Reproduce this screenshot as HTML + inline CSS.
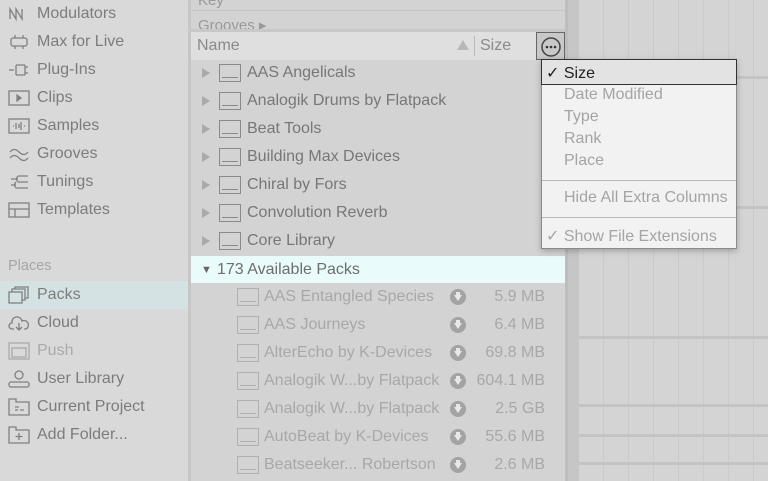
<!DOCTYPE html>
<html><head><style>
*{margin:0;padding:0;box-sizing:border-box}
body{width:768px;height:481px;overflow:hidden;background:#d6d6d6;font-family:"Liberation Sans",sans-serif;position:relative;color:#7a7a7a}
.abs{position:absolute}
.side{left:0;top:0;width:188px;height:481px;background:#d9d9d9}
.sb{left:188px;top:0;width:3px;height:481px;background:#c6c6c6}
.si{position:absolute;left:8px;height:28px;font-size:16px;line-height:28px;display:flex;align-items:center;color:#7c7c7c}
.si svg{width:22px;height:18px;margin-right:7px;stroke:#808080;fill:none;stroke-width:1.3}
.br{left:191px;top:0;width:374px;height:481px;background:#d3d3d3}
.row{position:absolute;left:191px;width:374px;height:28px;font-size:16px;line-height:28px;color:#777}
.tri{position:absolute;left:11px;top:9px;width:0;height:0;border-left:8px solid #aaa;border-top:5px solid transparent;border-bottom:5px solid transparent}
.pk{position:absolute;width:22px;height:18px;border:1.5px solid #8a8a8a;top:5px}
.pk:after{content:"";position:absolute;left:2px;right:2px;bottom:3px;height:1px;background:#8a8a8a}
.lt .pk{border-color:#b0b0b0}.lt .pk:after{background:#b0b0b0}
.lt{color:#a8a8a8}
.dl{position:absolute;left:259px;top:6px;width:16px;height:16px;border-radius:50%;background:#a3a3a3}
.dl:after{content:"";position:absolute;left:4px;top:6px;border-top:6px solid #e8e8e8;border-left:4px solid transparent;border-right:4px solid transparent}
.dl:before{content:"";position:absolute;left:6px;top:3px;width:4px;height:4px;background:#e8e8e8}
.sz{position:absolute;right:20px;top:0}
.grid{left:579px;top:0;width:189px;height:481px;background:#d4d4d4;background-image:repeating-linear-gradient(90deg,transparent 0 24px,#cacaca 24px 25px)}
.hl{position:absolute;left:579px;width:189px;height:3px;background:#c4c4c4}
.mi{position:absolute;left:564px;font-size:16px;color:#a4a4a4}
</style></head><body>
<div class="abs side"></div><div class="abs sb"></div>
<div class="si" style="top:0"><svg viewBox="0 0 22 18"><path d="M2 14V4l6 10V4l6 10V4"/></svg>Modulators</div>
<div class="si" style="top:28px"><svg viewBox="0 0 22 18"><rect x="3" y="5" width="16" height="8" rx="2"/><path d="M7 2v3M15 2v3M7 13v3M15 13v3"/></svg>Max for Live</div>
<div class="si" style="top:56px"><svg viewBox="0 0 22 18"><path d="M1 9h5M8 4h9M8 14h9M8 4v10M17 4v10M17 6h3M17 12h3"/></svg>Plug-Ins</div>
<div class="si" style="top:84px"><svg viewBox="0 0 22 18"><rect x="1" y="2" width="20" height="14"/><path d="M9 6l4 3-4 3z" fill="#808080"/></svg>Clips</div>
<div class="si" style="top:112px"><svg viewBox="0 0 22 18"><rect x="1" y="2" width="20" height="14"/><path d="M5 9h1M8 6v6M11 7v4M13 5v8M16 9h1"/></svg>Samples</div>
<div class="si" style="top:140px"><svg viewBox="0 0 22 18"><path d="M2 7q4-5 9 0t9 0M2 13q4-5 9 0t9 0"/></svg>Grooves</div>
<div class="si" style="top:168px"><svg viewBox="0 0 22 18"><path d="M3 6h7M3 12h5M10 3h10M10 9h10M8 15h12M10 3q-3 3 0 6M8 9q-3 3 0 6"/></svg>Tunings</div>
<div class="si" style="top:196px"><svg viewBox="0 0 22 18"><rect x="1" y="2" width="20" height="14"/><path d="M1 8h20M7 8v8"/></svg>Templates</div>
<div class="abs" style="left:8px;top:258px;font-size:14.5px;color:#a6a6a6">Places</div>
<div class="abs" style="left:0;top:281px;width:188px;height:28px;background:#d5e2e3"></div>
<div class="si" style="top:281px"><svg viewBox="0 0 22 18"><rect x="1" y="6" width="13" height="11"/><path d="M4 6V3h13v11h-3M7 3V1h13v11h-3"/></svg>Packs</div>
<div class="si" style="top:309px"><svg viewBox="0 0 22 18"><path d="M6 15H4a3 3 0 0 1 0-6 5 5 0 0 1 10-2 4 4 0 0 1 4 8h-2M11 9v7M8 13l3 3 3-3"/></svg>Cloud</div>
<div class="si" style="top:337px;color:#aaa"><svg viewBox="0 0 22 18" style="stroke:#aaa"><rect x="1" y="1" width="20" height="16"/><rect x="4" y="6" width="14" height="9"/></svg>Push</div>
<div class="si" style="top:365px"><svg viewBox="0 0 22 18"><circle cx="11" cy="5" r="4"/><rect x="1" y="12" width="20" height="5" rx="2"/></svg>User Library</div>
<div class="si" style="top:393px"><svg viewBox="0 0 22 18"><path d="M1 1h7v3h13v13H1zM7 9h4M7 12h3M12 12h4"/></svg>Current Project</div>
<div class="si" style="top:421px"><svg viewBox="0 0 22 18"><path d="M1 1h7v3h13v13H1zM11 7v7M7.5 10.5h7"/></svg>Add Folder...</div>

<div class="abs br"></div>
<div class="abs" style="left:191px;top:10px;width:374px;height:1px;background:#c4c4c4"></div>
<div class="abs" style="left:198px;top:-8px;font-size:15px;color:#999">Key</div>
<div class="abs" style="left:198px;top:16px;font-size:15px;color:#999">Grooves ▸</div>
<div class="abs" style="left:191px;top:29px;width:374px;height:3px;background:#c8c8c8"></div>
<div class="abs" style="left:191px;top:32px;width:374px;height:28px;background:#dfdfdf"></div>
<div class="abs" style="left:197px;top:37px;font-size:16px;color:#8a8a8a">Name</div>
<div class="abs" style="left:457px;top:40px;border-bottom:10px solid #b8b8b8;border-left:6px solid transparent;border-right:6px solid transparent"></div>
<div class="abs" style="left:474px;top:36px;width:1px;height:20px;background:#b8b8b8"></div>
<div class="abs" style="left:480px;top:37px;font-size:16px;color:#8a8a8a">Size</div>
<div class="abs" style="left:536px;top:32px;width:29px;height:28px;background:#c8c8c8;border:1px solid #666"></div>
<svg class="abs" style="left:540px;top:36px" width="22" height="22" viewBox="0 0 22 22"><circle cx="11" cy="11" r="9" fill="none" stroke="#444" stroke-width="1.5"/><circle cx="7" cy="11" r="1.3" fill="#333"/><circle cx="11" cy="11" r="1.3" fill="#333"/><circle cx="15" cy="11" r="1.3" fill="#333"/></svg>
<div class="row" style="top:59px"><div class="tri"></div><div class="pk" style="left:28px"></div><span class="abs" style="left:56px">AAS Angelicals</span></div>
<div class="row" style="top:87px"><div class="tri"></div><div class="pk" style="left:28px"></div><span class="abs" style="left:56px">Analogik Drums by Flatpack</span></div>
<div class="row" style="top:115px"><div class="tri"></div><div class="pk" style="left:28px"></div><span class="abs" style="left:56px">Beat Tools</span></div>
<div class="row" style="top:143px"><div class="tri"></div><div class="pk" style="left:28px"></div><span class="abs" style="left:56px">Building Max Devices</span></div>
<div class="row" style="top:171px"><div class="tri"></div><div class="pk" style="left:28px"></div><span class="abs" style="left:56px">Chiral by Fors</span></div>
<div class="row" style="top:199px"><div class="tri"></div><div class="pk" style="left:28px"></div><span class="abs" style="left:56px">Convolution Reverb</span></div>
<div class="row" style="top:227px"><div class="tri"></div><div class="pk" style="left:28px"></div><span class="abs" style="left:56px">Core Library</span></div>
<div class="row" style="top:256px;height:27px;background:#e9fbfb;color:#6e6e6e"><span class="abs" style="left:10px;top:0;font-size:11px;color:#666">▼</span><span class="abs" style="left:26px">173 Available Packs</span></div>
<div class="row lt" style="top:283px"><div class="pk" style="left:46px"></div><span class="abs" style="left:73px">AAS Entangled Species</span><div class="dl"></div><span class="sz">5.9 MB</span></div>
<div class="row lt" style="top:311px"><div class="pk" style="left:46px"></div><span class="abs" style="left:73px">AAS Journeys</span><div class="dl"></div><span class="sz">6.4 MB</span></div>
<div class="row lt" style="top:339px"><div class="pk" style="left:46px"></div><span class="abs" style="left:73px">AlterEcho by K-Devices</span><div class="dl"></div><span class="sz">69.8 MB</span></div>
<div class="row lt" style="top:367px"><div class="pk" style="left:46px"></div><span class="abs" style="left:73px">Analogik W...by Flatpack</span><div class="dl"></div><span class="sz">604.1 MB</span></div>
<div class="row lt" style="top:395px"><div class="pk" style="left:46px"></div><span class="abs" style="left:73px">Analogik W...by Flatpack</span><div class="dl"></div><span class="sz">2.5 GB</span></div>
<div class="row lt" style="top:423px"><div class="pk" style="left:46px"></div><span class="abs" style="left:73px">AutoBeat by K-Devices</span><div class="dl"></div><span class="sz">55.6 MB</span></div>
<div class="row lt" style="top:451px"><div class="pk" style="left:46px"></div><span class="abs" style="left:73px">Beatseeker... Robertson</span><div class="dl"></div><span class="sz">2.6 MB</span></div>

<div class="abs" style="left:565px;top:0;width:3px;height:481px;background:#bdbdbd"></div>
<div class="abs" style="left:568px;top:0;width:11px;height:481px;background:#c6c6c6"></div>
<div class="abs grid"></div>
<div class="hl" style="top:76px"></div><div class="hl" style="top:206px"></div><div class="hl" style="top:336px"></div><div class="hl" style="top:404px"></div><div class="hl" style="top:434px"></div><div class="hl" style="top:462px"></div>

<div class="abs" style="left:541px;top:59px;width:196px;height:190px;background:#f2f2f2;border:1px solid #8a8a8a;box-shadow:0 2px 6px rgba(0,0,0,.25)"></div>
<div class="abs" style="left:541px;top:59px;width:196px;height:26px;background:#e3e3e3;border:1.5px solid #333"></div>
<div class="abs" style="left:546px;top:63px;font-size:16px;color:#222">✓ Size</div>
<div class="mi" style="top:86px">Date Modified</div>
<div class="mi" style="top:108px">Type</div>
<div class="mi" style="top:130px">Rank</div>
<div class="mi" style="top:152px">Place</div>
<div class="abs" style="left:542px;top:180px;width:194px;height:1px;background:#b8b8b8"></div>
<div class="mi" style="top:189px">Hide All Extra Columns</div>
<div class="abs" style="left:542px;top:217px;width:194px;height:1px;background:#b8b8b8"></div>
<div class="abs" style="left:546px;top:226px;font-size:16px;color:#a4a4a4">✓ Show File Extensions</div>
</body></html>
